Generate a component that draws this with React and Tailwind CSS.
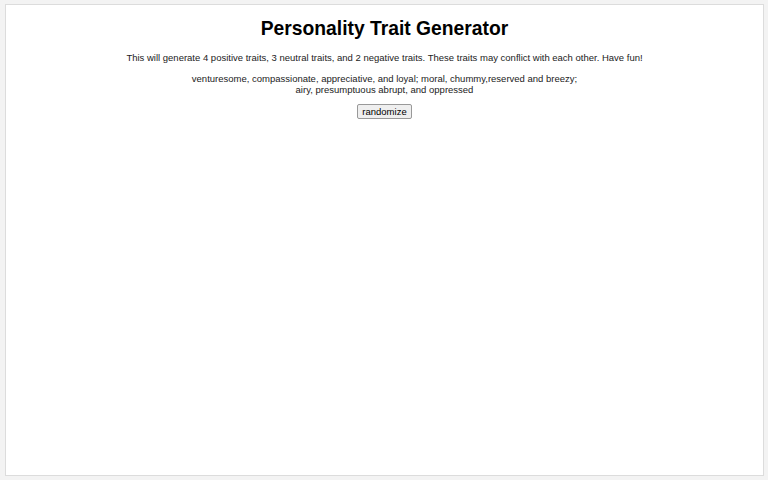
import { useState } from 'react';

const positive = ['venturesome', 'compassionate', 'appreciative', 'loyal'];
const neutral = ['moral', 'chummy', 'reserved', 'breezy'];
const negative = ['airy', 'presumptuous abrupt', 'oppressed'];

export default function App() {
  const [seed, setSeed] = useState(0);

  return (
    <div className="h-[480px] bg-[#f3f3f3] pt-[4px] pl-[5px] pr-[4px] pb-[4px]" style={{ fontFamily: '"Liberation Sans", Arial, sans-serif' }}>
      <div className="h-full bg-white border border-[#dcdcdc] flex flex-col items-center text-black">
        <h1 className="mt-[12px] text-[19.3px] leading-[24px] font-bold">Personality Trait Generator</h1>
        <p className="mt-[11px] text-[9.5px] leading-[12px] text-[#222]">
          This will generate 4 positive traits, 3 neutral traits, and 2 negative traits. These traits may conflict with each other. Have fun!
        </p>
        <p className="mt-[9px] text-[9.5px] leading-[11px] text-center text-[#222]" key={seed}>
          {positive.slice(0, 3).join(', ')}, and {positive[3]}; {neutral[0]}, {neutral[1]},{neutral[2]} and {neutral[3]};
          <br />
          {negative[0]}, {negative[1]}, and {negative[2]}
        </p>
        <button
          onClick={() => setSeed(seed + 1)}
          className="mt-[9px] h-[15px] px-[4px] text-[9.5px] leading-[12px] border border-[#999] rounded-[2px] bg-[#efefef] text-black"
        >
          randomize
        </button>
      </div>
    </div>
  );
}
